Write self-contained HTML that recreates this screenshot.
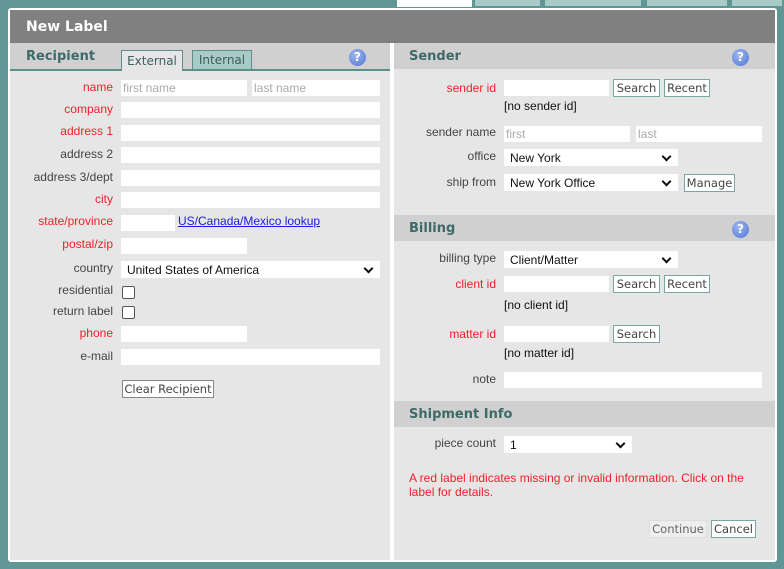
<!DOCTYPE html><html><head><style>
*{box-sizing:border-box;margin:0;padding:0}
body{width:784px;height:569px;background:#609794;position:relative;overflow:hidden;font-family:"Liberation Sans",Arial,sans-serif;font-size:12px;color:#444}
.a{position:absolute}
.lbl{position:absolute;text-align:right;white-space:nowrap;line-height:15px}
.r{color:#f0202a}
.in{position:absolute;background:#fff;height:16px;font-size:12px;color:#aaa;padding-left:2px;line-height:16px}
.sel{position:absolute;background:#fff;height:17px;color:#111;font-size:12px;padding-left:6px;line-height:18px}
.sel:after{content:"";position:absolute;right:8px;top:4px;width:5px;height:5px;border-right:2px solid #111;border-bottom:2px solid #111;transform:rotate(45deg)}
.btn{position:absolute;background:#fff;border:1px solid #7aa7a3;height:18px;font-family:"DejaVu Sans",sans-serif;font-size:11.5px;color:#444;line-height:16px;text-align:center;white-space:nowrap}
.hd{position:absolute;background:#d0d0d0;font-family:"DejaVu Sans",sans-serif;font-weight:bold;font-size:13px;color:#3e6a68;padding-left:15px}
.help{position:absolute;width:17px;height:17px;border-radius:50%;background:radial-gradient(circle at 40% 35%,#9fb8f0,#4d74d6);color:#fff;font:bold 12px "DejaVu Sans",sans-serif;text-align:center;line-height:17px}
.cb{position:absolute;width:13px;height:13px;border:1px solid #555;border-radius:2px;background:#fff}
.note{position:absolute;color:#111;font-size:12px}
</style></head><body>
<div class="a" style="left:397px;top:0;width:75px;height:7px;background:#fff"></div>
<div class="a" style="left:475px;top:0;width:65px;height:6px;background:#a9cbc8"></div>
<div class="a" style="left:545px;top:0;width:96px;height:6px;background:#a9cbc8"></div>
<div class="a" style="left:647px;top:0;width:80px;height:6px;background:#a9cbc8"></div>
<div class="a" style="left:732px;top:0;width:50px;height:6px;background:#a9cbc8"></div>
<div class="a" style="left:8px;top:8px;width:769px;height:554px;background:#fff;border-radius:3px"></div>
<div class="a" style="left:10px;top:10px;width:765px;height:33px;background:#808080;color:#fff;font:bold 14px 'DejaVu Sans',sans-serif;padding:9px 0 0 16px">New Label</div>
<div class="a" style="left:10px;top:43px;width:380px;height:517px;background:#e6e6e6"></div>
<div class="a" style="left:394px;top:43px;width:381px;height:517px;background:#e6e6e6"></div>
<div class="hd" style="left:10px;top:43px;width:380px;height:27px;line-height:28px;padding-left:16px">Recipient</div>
<div class="a" style="left:10px;top:69px;width:380px;height:2px;background:#5f8f8c"></div>
<div class="a" style="left:121px;top:50px;width:62px;height:21px;background:#e6e6e6;border:1px solid #5f8f8c;border-bottom:none;font-family:'DejaVu Sans';font-size:12px;color:#3e5e5c;text-align:center;line-height:20px">External</div>
<div class="a" style="left:192px;top:50px;width:60px;height:20px;background:#a9cbc8;border:1px solid #5f8f8c;font-family:'DejaVu Sans';font-size:12px;color:#3e5e5c;text-align:center;line-height:19px">Internal</div>
<div class="help" style="left:349px;top:49px">?</div>
<div class="lbl r" style="right:671px;top:80px">name</div>
<div class="in" style="left:121px;top:80px;width:126px">first name</div>
<div class="in" style="left:252px;top:80px;width:128px">last name</div>
<div class="lbl r" style="right:671px;top:102px">company</div><div class="in" style="left:121px;top:102px;width:259px"></div>
<div class="lbl r" style="right:671px;top:124px">address 1</div><div class="in" style="left:121px;top:125px;width:259px"></div>
<div class="lbl" style="right:671px;top:147px">address 2</div><div class="in" style="left:121px;top:147px;width:259px"></div>
<div class="lbl" style="right:671px;top:170px">address 3/dept</div><div class="in" style="left:121px;top:170px;width:259px"></div>
<div class="lbl r" style="right:671px;top:192px">city</div><div class="in" style="left:121px;top:192px;width:259px"></div>
<div class="lbl r" style="right:671px;top:214px">state/province</div><div class="in" style="left:121px;top:215px;width:54px"></div>
<div class="a" style="left:178px;top:214px;color:#1a1ae0;text-decoration:underline">US/Canada/Mexico lookup</div>
<div class="lbl r" style="right:671px;top:237px">postal/zip</div><div class="in" style="left:121px;top:238px;width:126px"></div>
<div class="lbl" style="right:671px;top:261px">country</div><div class="sel" style="left:121px;top:261px;width:259px">United States of America</div>
<div class="lbl" style="right:671px;top:283px">residential</div><div class="cb" style="left:122px;top:286px"></div>
<div class="lbl" style="right:671px;top:304px">return label</div><div class="cb" style="left:122px;top:306px"></div>
<div class="lbl r" style="right:671px;top:326px">phone</div><div class="in" style="left:121px;top:326px;width:126px"></div>
<div class="lbl" style="right:671px;top:349px">e-mail</div><div class="in" style="left:121px;top:349px;width:259px"></div>
<div class="btn" style="left:122px;top:380px;width:92px;border-color:#888">Clear Recipient</div>

<div class="hd" style="left:394px;top:43px;width:381px;height:26px;line-height:28px">Sender</div>
<div class="help" style="left:732px;top:49px">?</div>
<div class="lbl r" style="right:288px;top:81px">sender id</div>
<div class="in" style="left:504px;top:80px;width:105px"></div>
<div class="btn" style="left:613px;top:79px;width:47px">Search</div>
<div class="btn" style="left:664px;top:79px;width:46px">Recent</div>
<div class="note" style="left:504px;top:99px">[no sender id]</div>
<div class="lbl" style="right:288px;top:125px">sender name</div>
<div class="in" style="left:504px;top:126px;width:126px">first</div>
<div class="in" style="left:636px;top:126px;width:126px">last</div>
<div class="lbl" style="right:288px;top:149px">office</div><div class="sel" style="left:504px;top:149px;width:174px">New York</div>
<div class="lbl" style="right:288px;top:175px">ship from</div><div class="sel" style="left:504px;top:174px;width:174px">New York Office</div>
<div class="btn" style="left:684px;top:174px;width:51px">Manage</div>

<div class="hd" style="left:394px;top:215px;width:381px;height:26px;line-height:27px">Billing</div>
<div class="help" style="left:732px;top:221px">?</div>
<div class="lbl" style="right:288px;top:251px">billing type</div><div class="sel" style="left:504px;top:251px;width:174px">Client/Matter</div>
<div class="lbl r" style="right:288px;top:277px">client id</div>
<div class="in" style="left:504px;top:276px;width:105px"></div>
<div class="btn" style="left:613px;top:275px;width:47px">Search</div>
<div class="btn" style="left:664px;top:275px;width:46px">Recent</div>
<div class="note" style="left:504px;top:298px">[no client id]</div>
<div class="lbl r" style="right:288px;top:327px">matter id</div>
<div class="in" style="left:504px;top:326px;width:105px"></div>
<div class="btn" style="left:613px;top:325px;width:47px">Search</div>
<div class="note" style="left:504px;top:346px">[no matter id]</div>
<div class="lbl" style="right:288px;top:372px">note</div><div class="in" style="left:504px;top:372px;width:258px"></div>

<div class="hd" style="left:394px;top:401px;width:381px;height:26px;line-height:27px">Shipment Info</div>
<div class="lbl" style="right:288px;top:436px">piece count</div><div class="sel" style="left:504px;top:436px;width:128px">1</div>
<div class="a r" style="left:409px;top:471px;width:350px;line-height:14px">A red label indicates missing or invalid information. Click on the label for details.</div>
<div class="btn" style="left:649px;top:520px;width:58px;background:#eee;border-color:#ddd;color:#666">Continue</div>
<div class="btn" style="left:711px;top:520px;width:45px">Cancel</div>
</body></html>
